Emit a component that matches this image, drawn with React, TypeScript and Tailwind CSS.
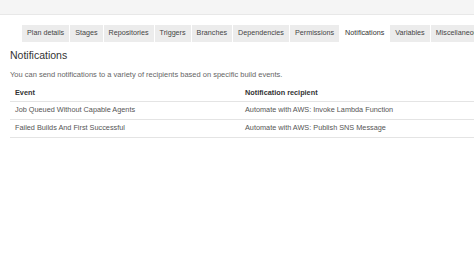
import React from "react";

const tabs = [
  "Plan details",
  "Stages",
  "Repositories",
  "Triggers",
  "Branches",
  "Dependencies",
  "Permissions",
  "Notifications",
  "Variables",
  "Miscellaneous",
];

const rows = [
  ["Job Queued Without Capable Agents", "Automate with AWS: Invoke Lambda Function"],
  ["Failed Builds And First Successful", "Automate with AWS: Publish SNS Message"],
];

export default function App() {
  return (
    <div
      className="w-[474px] h-[270px] overflow-hidden bg-white text-[#333]"
      style={{ fontFamily: '"Liberation Sans", Arial, sans-serif' }}
    >
      <div className="h-[15px] bg-[#f5f5f5] border-b border-[#e8e8e8]" />
      <div className="flex pl-[21px] mt-[10px] whitespace-nowrap">
        {tabs.map((t) => (
          <div
            key={t}
            className={
              "h-[17px] px-[5px] flex items-center text-[7.2px] border-l border-white shrink-0 " +
              (t === "Notifications" ? "bg-white text-[#333]" : "bg-[#ececec] text-[#444]")
            }
          >
            {t}
          </div>
        ))}
      </div>
      <div className="pl-[10px]">
        <div className="text-[10.5px] leading-[13px] mt-[7px] text-[#333]">Notifications</div>
        <div className="text-[7.5px] text-[#666] mt-[8px] leading-[9px]">
          You can send notifications to a variety of recipients based on specific build events.
        </div>
        <div className="mt-[6px]">
          <div className="flex h-[17px] items-center border-b border-[#e4e4e4] text-[7.3px] font-bold text-[#333]">
            <div className="w-[235px] pl-[5px]">Event</div>
            <div>Notification recipient</div>
          </div>
          {rows.map(([a, b]) => (
            <div
              key={a}
              className="flex h-[18px] items-center border-b border-[#e4e4e4] text-[7.3px] text-[#555]"
            >
              <div className="w-[235px] pl-[5px]">{a}</div>
              <div>{b}</div>
            </div>
          ))}
        </div>
      </div>
    </div>
  );
}
